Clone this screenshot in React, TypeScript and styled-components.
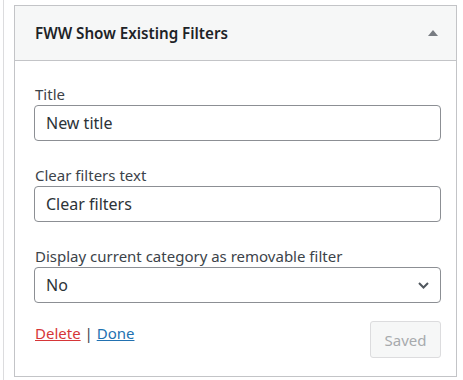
import styled, { createGlobalStyle } from "styled-components";

const GlobalStyle = createGlobalStyle`
  body {
    margin: 0;
    background: #fff;
    font-family: "Noto Sans", "Open Sans", sans-serif;
    color: #3c434a;
  }
`;

const Sidebar = styled.div`
  margin-left: 3px;
  border-left: 1px solid #dcdcde;
  padding: 5px 6px 4px 10px;
  min-height: 371px;
`;

const Widget = styled.div`
  width: 441px;
  border: 1px solid #c3c4c7;
  background: #fff;
`;

const WidgetHeader = styled.div`
  display: flex;
  align-items: center;
  justify-content: space-between;
  height: 54px;
  padding: 0 18px 0 20px;
  background: #f6f7f7;
  border-bottom: 1px solid #c3c4c7;
`;

const WidgetTitle = styled.h3`
  margin: 0;
  font-size: 15.2px;
  font-weight: 600;
  color: #1d2327;
`;

const Toggle = styled.span`
  width: 0;
  height: 0;
  border-left: 5px solid transparent;
  border-right: 5px solid transparent;
  border-bottom: 6px solid #787c82;
  margin-top: -1px;
`;

const WidgetBody = styled.div`
  display: flex;
  flex-direction: column;
  gap: 24px;
  padding: 23px 15px 18px 19px;
`;

const Field = styled.div`
  display: flex;
  flex-direction: column;
  gap: 1px;
`;

const Label = styled.label`
  font-size: 15px;
  line-height: 20px;
  padding-left: 1px;
  color: #3c434a;
`;

const TextInput = styled.input`
  box-sizing: border-box;
  width: 100%;
  height: 36px;
  margin: 0;
  padding: 0 11px;
  font: inherit;
  font-size: 16px;
  color: #2c3338;
  border: 1px solid #8c8f94;
  border-radius: 4px;
  background: #fff;
  outline: none;
`;

const SelectWrap = styled.div`
  position: relative;
`;

const Select = styled.select`
  box-sizing: border-box;
  width: 100%;
  height: 36px;
  margin: 0;
  padding: 0 30px 0 11px;
  font: inherit;
  font-size: 16px;
  color: #2c3338;
  border: 1px solid #8c8f94;
  border-radius: 4px;
  background: #fff;
  appearance: none;
  outline: none;
`;

const Chevron = styled.svg`
  position: absolute;
  right: 12px;
  top: 15px;
  pointer-events: none;
`;

const Actions = styled.div`
  display: flex;
  justify-content: space-between;
  align-items: flex-start;
  margin-top: -6px;
`;

const Links = styled.div`
  margin-top: 2px;
  padding-left: 1px;
  font-size: 15px;
  line-height: 20px;
  color: #3c434a;
`;

const Link = styled.a<{ $danger?: boolean }>`
  color: ${(p) => (p.$danger ? "#d63638" : "#2271b1")};
  text-decoration: underline;
  cursor: pointer;
`;

const SaveButton = styled.button`
  box-sizing: border-box;
  width: 71px;
  height: 37px;
  font: inherit;
  font-size: 15px;
  color: #a7aaad;
  background: #f6f7f7;
  border: 1px solid #dcdcde;
  border-radius: 3px;
  padding: 0;
`;

export default function App() {
  return (
    <>
      <GlobalStyle />
      <Sidebar>
        <Widget>
          <WidgetHeader>
            <WidgetTitle>FWW Show Existing Filters</WidgetTitle>
            <Toggle />
          </WidgetHeader>
          <WidgetBody>
            <Field>
              <Label htmlFor="title">Title</Label>
              <TextInput id="title" defaultValue="New title" />
            </Field>
            <Field>
              <Label htmlFor="clear">Clear filters text</Label>
              <TextInput id="clear" defaultValue="Clear filters" />
            </Field>
            <Field>
              <Label htmlFor="cat">Display current category as removable filter</Label>
              <SelectWrap>
                <Select id="cat" defaultValue="no">
                  <option value="no">No</option>
                  <option value="yes">Yes</option>
                </Select>
                <Chevron width="11" height="7" viewBox="0 0 11 7">
                  <path d="M1 1l4.5 4.5L10 1" fill="none" stroke="#50575e" strokeWidth="2" />
                </Chevron>
              </SelectWrap>
            </Field>
            <Actions>
              <Links>
                <Link $danger>Delete</Link> | <Link>Done</Link>
              </Links>
              <SaveButton disabled>Saved</SaveButton>
            </Actions>
          </WidgetBody>
        </Widget>
      </Sidebar>
    </>
  );
}
